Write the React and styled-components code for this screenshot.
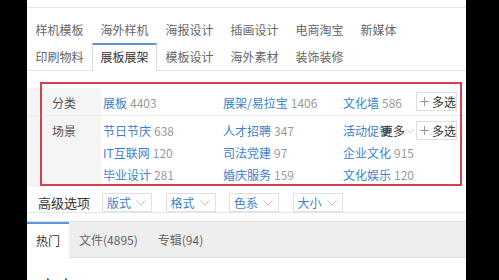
import React from 'react';
import styled, { createGlobalStyle } from 'styled-components';

const Global = createGlobalStyle`
  html, body { margin: 0; padding: 0; background: #000; }
  body {
    font-family: "Noto Sans CJK SC", "Noto Sans", sans-serif;
    font-size: 12px;
    color: #333;
  }
`;

const Page = styled.div`
  margin-left: 27px;
  width: 439px;
  height: 280px;
  background: #fff;
  overflow: hidden;
`;

const TopStrip = styled.div`
  height: 7px;
  border-bottom: 1px solid #e6e6e6;
`;

const CategoryTabs = styled.div`
  display: flex;
  flex-wrap: wrap;
  padding-top: 8px;
  border-bottom: 1px solid #e3e3e3;
`;

const CatTab = styled.div`
  box-sizing: border-box;
  height: 27px;
  padding: 0 7.5px;
  line-height: 25px;
  border: 1px solid transparent;
  border-bottom: none;
  color: #666;
  white-space: nowrap;
  ${(p) =>
    p.$active &&
    `
    height: 28px;
    margin-bottom: -1px;
    color: #333;
    background: #fff;
    border-color: #dcdcdc;
    border-top: 2px solid #5a96d8;
    line-height: 23px;
  `}
`;

const FilterPanel = styled.div`
  position: relative;
  margin-top: 17px;
`;

const FilterRow = styled.div`
  display: flex;
  border-bottom: ${(p) => (p.$last ? 'none' : '1px solid #ebebeb')};
`;

const RowLabel = styled.div`
  box-sizing: border-box;
  width: 74px;
  padding: 4px 0 0 25px;
  background: #f5f5f5;
  color: #555;
  line-height: 22px;
`;

const RowBody = styled.div`
  flex: 1;
  display: flex;
  padding: 4px 9px 1px 2px;
`;

const OptionGrid = styled.div`
  position: relative;
  flex: 1;
  display: grid;
  grid-template-columns: 120px 120px 1fr;
  grid-auto-rows: 22px;
`;

const Option = styled.div`
  line-height: 22px;
  white-space: nowrap;
`;

const OptionName = styled.span`
  color: #3d7fcc;
`;

const Count = styled.span`
  color: #9a9a9a;
  margin-left: 3px;
`;

const MoreToggle = styled.div`
  position: absolute;
  top: 0;
  left: 278px;
  display: flex;
  align-items: center;
  gap: 1px;
  line-height: 22px;
  color: #333;
`;

const MultiButton = styled.button`
  align-self: flex-start;
  box-sizing: border-box;
  display: flex;
  align-items: center;
  gap: 3px;
  width: 41px;
  height: 19px;
  margin-top: ${(p) => p.$offset || 0}px;
  padding: 0 0 0 3px;
  border: 1px solid #dedede;
  background: #fff;
  font: inherit;
  font-size: 12px;
  line-height: 17px;
  color: #333;
`;

const Highlight = styled.div`
  position: absolute;
  top: -6px;
  left: 13px;
  width: 422px;
  height: 104px;
  box-sizing: border-box;
  border: 2px solid #d3404f;
  pointer-events: none;
`;

const AdvancedRow = styled.div`
  display: flex;
  align-items: center;
  gap: 13.5px;
  height: 19px;
  padding: 6px 0 0 11px;
  border-bottom: 1px solid #e6e6e6;
`;

const AdvancedLabel = styled.div`
  font-size: 13px;
  color: #333;
  margin-right: -1.5px;
  line-height: 19px;
`;

const Dropdown = styled.div`
  box-sizing: border-box;
  width: 50px;
  height: 19px;
  display: flex;
  align-items: center;
  justify-content: space-between;
  padding: 0 5px 0 4px;
  border: 1px solid #e0e0e0;
  color: #3d7fcc;
  line-height: 17px;
`;

const ResultTabs = styled.div`
  display: flex;
  align-items: flex-start;
  height: 35px;
  margin-top: 8px;
  background: #eeeeee;
  border-top: 1px solid #e2e2e2;
  border-bottom: 1px solid #dcdcdc;
`;

const ResultTab = styled.div`
  height: 35px;
  padding: 0 10px;
  line-height: 35px;
  color: #666;
  white-space: nowrap;
  ${(p) =>
    p.$active &&
    `
    box-sizing: border-box;
    height: 36px;
    margin-bottom: -1px;
    padding: 0 9px;
    background: #fff;
    color: #333;
    border-top: 2px solid #5a96d8;
    line-height: 33px;
  `}
`;

const Heading = styled.div`
  margin: 16px 0 0 12px;
  font-size: 18px;
  line-height: 24px;
  color: #333;
`;

const Chevron = ({ w = 10, color = '#bdbdbd' }) => (
  <svg width={w} height={6} viewBox="0 0 10 6" fill="none">
    <polyline points="0.5,0.5 5,5.2 9.5,0.5" stroke={color} strokeWidth="1" />
  </svg>
);

const Plus = () => (
  <svg width={9} height={9} viewBox="0 0 9 9" fill="none">
    <line x1="4.5" y1="0" x2="4.5" y2="9" stroke="#999" strokeWidth="1" />
    <line x1="0" y1="4.5" x2="9" y2="4.5" stroke="#999" strokeWidth="1" />
  </svg>
);

const categories = [
  '样机模板', '海外样机', '海报设计', '插画设计', '电商淘宝', '新媒体',
  '印刷物料', '展板展架', '模板设计', '海外素材', '装饰装修',
];

const typeOptions = [
  ['展板', '4403'],
  ['展架/易拉宝', '1406'],
  ['文化墙', '586'],
];

const sceneOptions = [
  ['节日节庆', '638'],
  ['人才招聘', '347'],
  ['活动促销', null],
  ['IT互联网', '120'],
  ['司法党建', '97'],
  ['企业文化', '915'],
  ['毕业设计', '281'],
  ['婚庆服务', '159'],
  ['文化娱乐', '120'],
];

const renderOptions = (list) =>
  list.map(([name, count]) => (
    <Option key={name}>
      <OptionName>{name}</OptionName>
      {count && <Count>{count}</Count>}
    </Option>
  ));

export default function App() {
  return (
    <>
      <Global />
      <Page>
        <TopStrip />
        <CategoryTabs>
          {categories.map((c) => (
            <CatTab key={c} $active={c === '展板展架'}>
              {c}
            </CatTab>
          ))}
        </CategoryTabs>

        <FilterPanel>
          <FilterRow>
            <RowLabel>分类</RowLabel>
            <RowBody>
              <OptionGrid>{renderOptions(typeOptions)}</OptionGrid>
              <MultiButton>
                <Plus />
                多选
              </MultiButton>
            </RowBody>
          </FilterRow>
          <FilterRow $last>
            <RowLabel>场景</RowLabel>
            <RowBody>
              <OptionGrid>
                {renderOptions(sceneOptions)}
                <MoreToggle>
                  更多
                  <Chevron w={8} />
                </MoreToggle>
              </OptionGrid>
              <MultiButton $offset={1}>
                <Plus />
                多选
              </MultiButton>
            </RowBody>
          </FilterRow>
          <Highlight />
        </FilterPanel>

        <AdvancedRow>
          <AdvancedLabel>高级选项</AdvancedLabel>
          {['版式', '格式', '色系', '大小'].map((d) => (
            <Dropdown key={d}>
              {d}
              <Chevron />
            </Dropdown>
          ))}
        </AdvancedRow>

        <ResultTabs>
          <ResultTab $active>热门</ResultTab>
          <ResultTab>文件(4895)</ResultTab>
          <ResultTab>专辑(94)</ResultTab>
        </ResultTabs>

        <Heading>文本</Heading>
      </Page>
    </>
  );
}
